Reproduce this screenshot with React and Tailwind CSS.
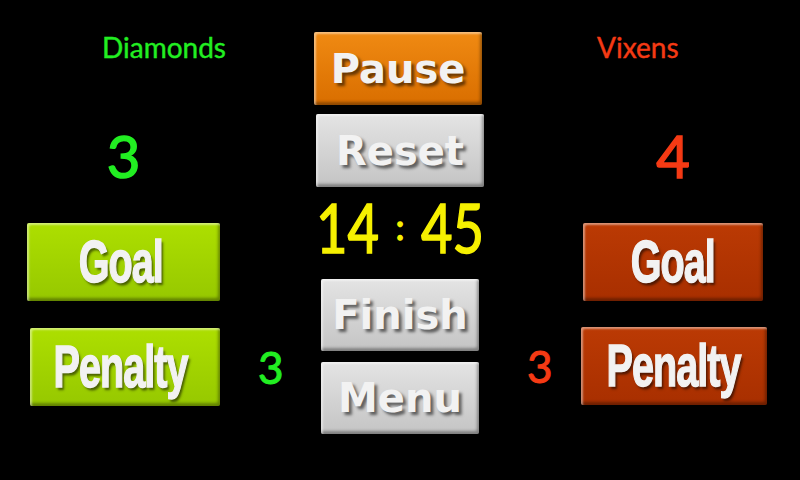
import React from 'react';

const bevel =
  'shadow-[inset_2px_2px_2px_rgba(255,255,255,0.45),inset_-2px_-3px_3px_rgba(0,0,0,0.35)] rounded-[2px]';
const embossed = '[text-shadow:3px_3px_3px_rgba(0,0,0,0.55)] text-[#f2f2f2]';

const teamFont = { fontFamily: 'Lato, "Noto Sans", sans-serif' };
const condensed = { fontFamily: '"Liberation Sans", Arial, sans-serif' };
const heavy = { fontFamily: '"DejaVu Sans", Verdana, sans-serif' };

function TeamButton({ label, className }) {
  return (
    <div className={`flex h-[78px] items-center justify-center overflow-hidden ${bevel} ${className}`}>
      <span
        className={`inline-block scale-x-[0.66] text-[60px] font-bold leading-none tracking-tight [-webkit-text-stroke:1.5px_#f2f2f2] ${embossed}`}
        style={condensed}
      >
        {label}
      </span>
    </div>
  );
}

function CenterButton({ label, className }) {
  return (
    <div className={`flex items-center justify-center ${bevel} ${className}`}>
      <span className={`text-[40px] font-bold leading-none ${embossed}`} style={heavy}>
        {label}
      </span>
    </div>
  );
}

export default function App() {
  const home = { name: 'Diamonds', score: 3, penalties: 3 };
  const away = { name: 'Vixens', score: 4, penalties: 3 };

  return (
    <div className="flex h-[480px] w-[800px] overflow-hidden bg-black">
      {/* home side */}
      <div className="flex w-[300px] flex-col">
        <div className="ml-[102px] mt-[33px] text-[28px] leading-none text-[#22ee22] [-webkit-text-stroke:0.4px_#22ee22]" style={teamFont}>
          {home.name}
        </div>
        <div className="ml-[27px] mt-[66px] w-[193px] text-center text-[58px] leading-none text-[#22ee22] [-webkit-text-stroke:1.5px_#22ee22]" style={teamFont}>
          {home.score}
        </div>
        <TeamButton
          label="Goal"
          className="ml-[27px] mt-[38px] w-[193px] pr-[6px] bg-linear-to-b from-[#addf00] to-[#96c800]"
        />
        <div className="mt-[27px] flex items-center">
          <TeamButton
            label="Penalty"
            className="ml-[30px] w-[190px] pr-[10px] bg-linear-to-b from-[#addf00] to-[#96c800]"
          />
          <span className="ml-[38px] text-[44px] leading-none text-[#22ee22] [-webkit-text-stroke:1px_#22ee22]" style={teamFont}>
            {home.penalties}
          </span>
        </div>
      </div>

      {/* centre controls */}
      <div className="flex w-[200px] flex-col">
        <CenterButton
          label="Pause"
          className="ml-[14px] mt-[32px] h-[73px] w-[168px] bg-linear-to-b from-[#f08a12] to-[#d96e00]"
        />
        <CenterButton
          label="Reset"
          className="ml-[16px] mt-[9px] h-[73px] w-[168px] bg-linear-to-b from-[#e4e4e4] to-[#c4c4c4]"
        />
        <div
          className="mt-[5px] flex h-[70px] items-center justify-center text-[#f6f000] [-webkit-text-stroke:1.5px_#f6f000]"
          style={teamFont}
        >
          <span className="inline-block scale-x-[0.8] text-[68px] leading-none">14</span>
          <span className="mx-[9px] text-[34px] leading-none">:</span>
          <span className="inline-block scale-x-[0.8] text-[68px] leading-none">45</span>
        </div>
        <CenterButton
          label="Finish"
          className="ml-[21px] mt-[17px] h-[72px] w-[158px] bg-linear-to-b from-[#e4e4e4] to-[#c4c4c4]"
        />
        <CenterButton
          label="Menu"
          className="ml-[21px] mt-[11px] h-[72px] w-[158px] bg-linear-to-b from-[#e4e4e4] to-[#c4c4c4]"
        />
      </div>

      {/* away side */}
      <div className="flex w-[300px] flex-col">
        <div className="ml-[97px] mt-[33px] text-[28px] leading-none text-[#f53a14] [-webkit-text-stroke:0.4px_#f53a14]" style={teamFont}>
          {away.name}
        </div>
        <div className="ml-[83px] mt-[66px] w-[180px] text-center text-[58px] leading-none text-[#f53a14] [-webkit-text-stroke:1.5px_#f53a14]" style={teamFont}>
          {away.score}
        </div>
        <TeamButton
          label="Goal"
          className="ml-[83px] mt-[38px] w-[180px] bg-linear-to-b from-[#bb3a04] to-[#a82f00]"
        />
        <div className="mt-[26px] flex items-center">
          <span className="ml-[27px] text-[44px] leading-none text-[#f53a14] [-webkit-text-stroke:1px_#f53a14]" style={teamFont}>
            {away.penalties}
          </span>
          <TeamButton
            label="Penalty"
            className="ml-[28px] w-[186px] bg-linear-to-b from-[#bb3a04] to-[#a82f00]"
          />
        </div>
      </div>
    </div>
  );
}
